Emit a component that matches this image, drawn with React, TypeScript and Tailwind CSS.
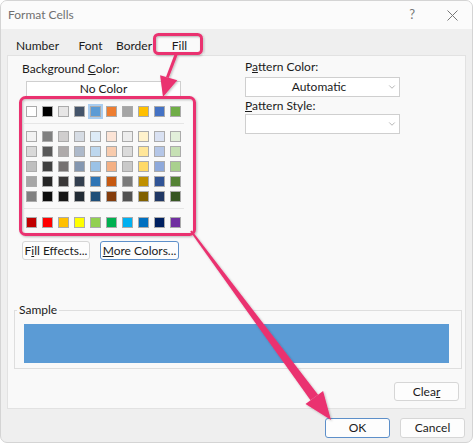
import React from 'react';
import { ChevronDown } from 'lucide-react';

const themeRow = ['#ffffff', '#000000', '#e7e6e6', '#44546a', '#5b9bd5', '#ed7d31', '#a5a5a5', '#ffc000', '#4472c4', '#70ad47'];

const tintRows = [
  ['#f2f2f2', '#808080', '#d0cece', '#d6dce4', '#ddebf7', '#fce4d6', '#ededed', '#fff2cc', '#d9e1f2', '#e2efda'],
  ['#d9d9d9', '#595959', '#aeaaaa', '#adb9ca', '#bdd7ee', '#f8cbad', '#dbdbdb', '#ffe699', '#b4c6e7', '#c6e0b4'],
  ['#bfbfbf', '#404040', '#757171', '#8497b0', '#9bc2e6', '#f4b084', '#c9c9c9', '#ffd966', '#8ea9db', '#a9d08e'],
  ['#a6a6a6', '#262626', '#3a3838', '#333f4f', '#2f75b5', '#c65911', '#7b7b7b', '#bf8f00', '#305496', '#548235'],
  ['#808080', '#0d0d0d', '#161616', '#222b35', '#1f4e78', '#833c0c', '#525252', '#806000', '#203764', '#375623'],
];

const standardRow = ['#c00000', '#ff0000', '#ffc000', '#ffff00', '#92d050', '#00b050', '#00b0f0', '#0070c0', '#002060', '#7030a0'];

const Swatch = ({ color, selected = false }: { color: string; selected?: boolean }) => (
  <div className={`w-[11px] h-[11px] flex items-center justify-center ${selected ? 'outline outline-2 outline-[#a9cdf0]' : ''}`}>
    <div className="w-[11px] h-[11px] border border-[#ababab]" style={{ backgroundColor: color }} />
  </div>
);

const SwatchRow = ({ colors, selectedIndex = -1 }: { colors: string[]; selectedIndex?: number }) => (
  <div className="flex gap-[5px]">
    {colors.map((c, i) => (
      <Swatch key={i} color={c} selected={i === selectedIndex} />
    ))}
  </div>
);

const Btn = ({ children, className = '' }: { children: React.ReactNode; className?: string }) => (
  <div className={`h-[19px] flex items-center justify-center rounded-[3px] bg-[#fdfdfd] border text-[12px] text-[#1b1b1b] ${className}`}>
    <span className="whitespace-nowrap">{children}</span>
  </div>
);

const Select = ({ value }: { value?: string }) => (
  <div className="w-[155px] h-[20px] bg-white border border-[#cfcfcf] flex items-center">
    <div className="flex-1 text-center text-[12px] text-[#1b1b1b] pl-[8px]">{value}</div>
    <div className="w-[15px] h-full flex items-center justify-center">
      <ChevronDown size={10} strokeWidth={1.5} className="text-[#8a8a8a]" />
    </div>
  </div>
);

export default function App() {
  return (
    <div className="relative w-[474px] h-[445px] bg-white" style={{ fontFamily: 'Lato, "Noto Sans", sans-serif' }}>
      <div className="w-[473px] h-[443px] rounded-[7px] border border-[#d4d4d4] bg-[#efefef] overflow-hidden flex flex-col">
        {/* Title bar */}
        <div className="h-[28px] bg-[#fbfbfb] flex items-center pl-[7px] pr-[14px] shrink-0">
          <div className="text-[12px] text-[#707070]">Format Cells</div>
          <div className="ml-auto text-[13px] text-[#777] mr-[32px]">?</div>
          <svg width="11" height="11" viewBox="0 0 11 11">
            <path d="M0.5 0.5 L10.5 10.5 M10.5 0.5 L0.5 10.5" stroke="#777" strokeWidth="1" />
          </svg>
        </div>

        {/* Tabs */}
        <div className="h-[26px] flex items-end pl-[7px] shrink-0">
          <div className="h-[18px] flex items-center text-[12px] text-[#1b1b1b]">
            <div className="w-[59px] text-center">Number</div>
            <div className="w-[47px] text-center">Font</div>
            <div className="w-[40px] text-center">Border</div>
            <div className="w-[49px] h-[18px] leading-[18px] text-center bg-[#fafafa] ml-[1px]">Fill</div>
          </div>
        </div>

        {/* Tab panel */}
        <div className="ml-[6px] w-[459px] h-[354px] bg-[#f9f9f9] border border-[#e2e2e2] flex flex-col shrink-0">
          <div className="flex">
            <div className="w-[237px] pl-[14px] pt-[5px] flex flex-col">
              <div className="text-[12px] leading-[16px] text-[#1b1b1b]">
                Background <span className="underline">C</span>olor:
              </div>
              <div className="ml-[4px] mt-[4px] w-[155px] h-[16px] bg-white border border-[#cfcfcf] flex items-center justify-center text-[12px] text-[#1b1b1b]">
                No Color
              </div>
              <div className="ml-[4px] mt-[9px] flex flex-col">
                <SwatchRow colors={themeRow} selectedIndex={4} />
                <div className="mt-[6px] w-[160px] h-px bg-[#e6e6e6] -ml-[2px]" />
                <div className="mt-[7px] flex flex-col gap-[4px]">
                  {tintRows.map((r, i) => (
                    <SwatchRow key={i} colors={r} />
                  ))}
                </div>
                <div className="mt-[6px] w-[160px] h-px bg-[#e6e6e6] -ml-[2px]" />
                <div className="mt-[8px]">
                  <SwatchRow colors={standardRow} />
                </div>
              </div>
              <div className="mt-[13px] flex gap-[10px]">
                <Btn className="w-[68px] border-[#d6d6d6]">
                  F<span className="underline">i</span>ll Effects...
                </Btn>
                <Btn className="w-[79px] border-[#5d8fc9]">
                  <span className="underline">M</span>ore Colors...
                </Btn>
              </div>
            </div>

            <div className="pt-[3px] flex flex-col">
              <div className="text-[12px] leading-[16px] text-[#1b1b1b]">
                P<span className="underline">a</span>ttern Color:
              </div>
              <div className="mt-[2px]">
                <Select value="Automatic" />
              </div>
              <div className="mt-[1px] text-[12px] leading-[16px] text-[#1b1b1b]">
                <span className="underline">P</span>attern Style:
              </div>
              <div>
                <Select />
              </div>
            </div>
          </div>

          {/* Sample */}
          <fieldset className="ml-[6px] mt-[43px] w-[448px] border border-[#dedede] pl-[9px] pr-[12px] pb-[5px]">
            <legend className="-ml-[7px] px-[2px] text-[12px] leading-[14px] text-[#1b1b1b]">Sample</legend>
            <div className="mt-[7px] h-[39px] bg-[#5b9bd5]" />
          </fieldset>

          <div className="mt-[13px] flex justify-end pr-[6px]">
            <Btn className="w-[65px] border-[#d6d6d6]">
              Clea<span className="underline">r</span>
            </Btn>
          </div>
        </div>

        {/* Footer */}
        <div className="mt-[9px] flex justify-end gap-[10px] pr-[7px]">
          <Btn className="w-[65px] h-[20px] border-[#5d8fc9]">OK</Btn>
          <Btn className="w-[65px] h-[20px] border-[#d6d6d6]">Cancel</Btn>
        </div>
      </div>

      {/* Annotations */}
      <svg className="absolute inset-0 pointer-events-none" width="474" height="445" viewBox="0 0 474 445">
        <defs>
          <filter id="sh" x="-10%" y="-10%" width="120%" height="120%">
            <feDropShadow dx="1" dy="1" stdDeviation="1.2" floodColor="#000" floodOpacity="0.25" />
          </filter>
        </defs>
        <g filter="url(#sh)">
          <rect x="154.5" y="34.5" width="47" height="19" rx="4" fill="none" stroke="#ea3370" strokeWidth="3" />
          <rect x="20.5" y="97.5" width="174" height="137" rx="5" fill="none" stroke="#ea3370" strokeWidth="3" />
          <polygon points="175,53 178,54 168.7,78 166,77" fill="#ea3370" />
          <polygon points="163,97 177.3,80.3 160.1,75.3" fill="#ea3370" />
          <polygon points="190.2,231.6 191.8,230.4 318.1,394.7 310.5,400.3" fill="#ea3370" />
          <polygon points="331,420 323.1,391 305.5,404" fill="#ea3370" />
        </g>
      </svg>
    </div>
  );
}
